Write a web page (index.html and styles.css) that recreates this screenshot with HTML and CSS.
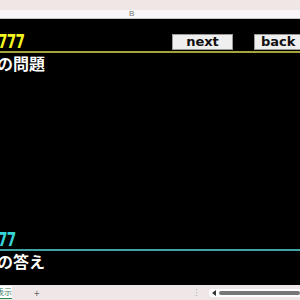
FILE: index.html
```html
<!DOCTYPE html>
<html>
<head>
<meta charset="utf-8">
<link rel="stylesheet" href="styles.css">
</head>
<body>
<div class="topbar"></div>
<div class="colhead"><span class="col-b">B</span></div>
<div class="sheet">
  <div class="qhead">
    <span class="num yellow">777</span>
    <div class="btns">
      <button class="btn btn-next">next</button>
      <button class="btn btn-back">back</button>
    </div>
  </div>
  <div class="title">の問題</div>
  <div class="spacer"></div>
  <div class="ahead"><span class="num cyan">77</span></div>
  <div class="title">の答え</div>
</div>
<div class="tabbar">
  <span class="tab">表示</span>
  <span class="plus">+</span>
  <span class="dots">⋮</span>
  <span class="scroll"><span class="arrow"></span><span class="thumb"></span></span>
</div>
</body>
</html>
```
FILE: styles.css
```css
html, body {
  margin: 0;
  padding: 0;
  width: 300px;
  height: 300px;
  overflow: hidden;
  font-family: "Noto Sans CJK JP", "Noto Sans", sans-serif;
}
.topbar {
  height: 10px;
  background: #efe6e6;
}
.colhead {
  height: 8px;
  background: #f9f7f7;
  border-bottom: 1px solid #c9c5c5;
  position: relative;
  font-family: "Liberation Sans", sans-serif;
  font-size: 8px;
  color: #777;
}
.col-b {
  position: absolute;
  left: 129px;
  top: -1px;
}
.sheet {
  background: #000;
  height: 266px;
  display: flex;
  flex-direction: column;
}
.qhead {
  display: flex;
  align-items: flex-end;
  justify-content: space-between;
  height: 32px;
  border-bottom: 2px solid #a6a33c;
}
.ahead {
  height: 32px;
  display: flex;
  align-items: flex-end;
  border-bottom: 2px solid #3fa3a3;
}
.num {
  display: inline-block;
  font-family: "DejaVu Sans", sans-serif;
  font-weight: bold;
  font-size: 19px;
  line-height: 18px;
  letter-spacing: -1px;
  transform: scaleX(0.72);
  transform-origin: left bottom;
  margin-left: -2px;
  margin-bottom: 1px;
}
.yellow { color: #f5f51e; }
.cyan { color: #36d4d8; }
.btns {
  display: flex;
  gap: 21px;
  margin-bottom: 1px;
}
.btn {
  width: 61px;
  height: 16px;
  padding: 0;
  border: 1px solid #9a9a9a;
  background: #efefef;
  font-family: "DejaVu Sans", sans-serif;
  font-weight: bold;
  font-size: 13px;
  line-height: 14px;
  color: #111;
}
.btn-back {
  width: 52px;
  text-align: left;
  padding-left: 6px;
  margin-right: -6px;
}
.title {
  color: #fff;
  font-weight: bold;
  font-size: 16px;
  line-height: 19px;
  margin-left: -3px;
  margin-top: 1px;
}
.spacer {
  flex: 1;
}
.ahead + .title {
  margin-bottom: 14px;
}
.tabbar {
  height: 15px;
  background: #efe7e7;
  display: flex;
  align-items: center;
  position: relative;
  font-size: 8px;
  color: #666;
}
.tab {
  width: 12px;
  overflow: hidden;
  white-space: nowrap;
  direction: rtl;
  background: #fff;
  color: #3a7a5a;
  border-bottom: 1px solid #2f8a4a;
  height: 12px;
  line-height: 12px;
  font-size: 8px;
}
.plus {
  margin-left: 22px;
  font-size: 10px;
  color: #666;
}
.dots {
  margin-left: 152px;
  color: #aaa;
  font-size: 9px;
}
.scroll {
  margin-left: 8px;
  flex: 1;
  display: flex;
  align-items: center;
  height: 8px;
  background: #fff;
  border-radius: 4px 0 0 4px;
}
.arrow {
  width: 0;
  height: 0;
  border-top: 3px solid transparent;
  border-bottom: 3px solid transparent;
  border-right: 4px solid #333;
  margin: 0 3px 0 3px;
}
.thumb {
  flex: 1;
  height: 4px;
  background: #777;
  border-radius: 2px;
}
```
